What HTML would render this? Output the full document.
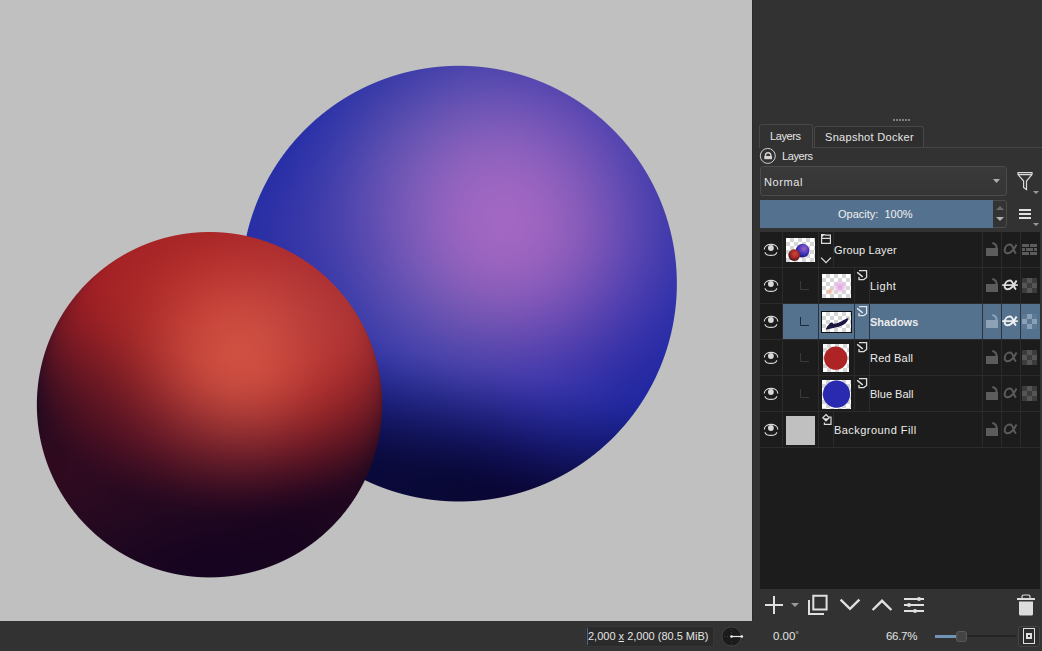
<!DOCTYPE html>
<html><head><meta charset="utf-8">
<style>
*{margin:0;padding:0;box-sizing:border-box}
html,body{width:1042px;height:651px;overflow:hidden;background:#323232;font-family:"Liberation Sans",sans-serif;color:#e6e6e6}
.a{position:absolute}
#canvas{left:0;top:0;width:752px;height:621px;background:#c0c0c0;overflow:hidden}
.t{position:absolute;font-size:11px;white-space:nowrap;line-height:13px}
#list{left:760px;top:232px;width:280px;height:357px;background:#1c1c1c}
.row{position:absolute;left:0;width:280px;height:36px;border-bottom:1px solid #2a2a2a}
.vl{position:absolute;top:0;width:1px;height:36px;background:#2a2a2a}
</style></head><body>
<div id="canvas" class="a">
<svg width="752" height="621" viewBox="0 0 752 621">
<defs>
<radialGradient id="bHi" cx="498" cy="214" r="345" gradientUnits="userSpaceOnUse">
<stop offset="0" stop-color="#a26cc1" stop-opacity="1"/>
<stop offset="0.1667" stop-color="#a26cc1" stop-opacity="0.88"/>
<stop offset="0.3333" stop-color="#a26cc1" stop-opacity="0.61"/>
<stop offset="0.5" stop-color="#a26cc1" stop-opacity="0.32"/>
<stop offset="0.6667" stop-color="#a26cc1" stop-opacity="0.135"/>
<stop offset="0.8333" stop-color="#a26cc1" stop-opacity="0.044"/>
<stop offset="1" stop-color="#a26cc1" stop-opacity="0"/>
</radialGradient>
<linearGradient id="bSh" x1="445.7" y1="345.4" x2="416.4" y2="482" gradientUnits="userSpaceOnUse">
<stop offset="0" stop-color="#0a0838" stop-opacity="0"/>
<stop offset="0.25" stop-color="#0a0838" stop-opacity="0.156"/>
<stop offset="0.5" stop-color="#0a0838" stop-opacity="0.5"/>
<stop offset="0.75" stop-color="#0a0838" stop-opacity="0.844"/>
<stop offset="1" stop-color="#0a0838" stop-opacity="1"/>
</linearGradient>
<radialGradient id="rHi" cx="250" cy="358" r="200" gradientUnits="userSpaceOnUse">
<stop offset="0" stop-color="#cf4f42" stop-opacity="1"/>
<stop offset="0.175" stop-color="#cf4f42" stop-opacity="0.88"/>
<stop offset="0.35" stop-color="#cf4f42" stop-opacity="0.61"/>
<stop offset="0.525" stop-color="#cf4f42" stop-opacity="0.32"/>
<stop offset="0.7" stop-color="#cf4f42" stop-opacity="0.135"/>
<stop offset="0.875" stop-color="#cf4f42" stop-opacity="0.044"/>
<stop offset="1" stop-color="#cf4f42" stop-opacity="0"/>
</radialGradient>
<radialGradient id="rSh" cx="236" cy="260" r="320" gradientUnits="userSpaceOnUse">
<stop offset="0.28" stop-color="#1f071f" stop-opacity="0"/>
<stop offset="0.406" stop-color="#1f071f" stop-opacity="0.06"/>
<stop offset="0.53" stop-color="#1f071f" stop-opacity="0.34"/>
<stop offset="0.64" stop-color="#1f071f" stop-opacity="0.67"/>
<stop offset="0.77" stop-color="#1f071f" stop-opacity="1"/>
</radialGradient>
</defs>
<circle cx="459" cy="283.65" r="217.85" fill="#1124a0"/>
<circle cx="459" cy="283.65" r="217.85" fill="url(#bHi)"/>
<circle cx="459" cy="283.65" r="217.85" fill="url(#bSh)"/>
<circle cx="209.55" cy="404.7" r="172.7" fill="#a12125"/>
<circle cx="209.55" cy="404.7" r="172.7" fill="url(#rHi)"/>
<circle cx="209.55" cy="404.7" r="172.7" fill="url(#rSh)"/>
</svg>
<canvas id="cv" width="752" height="621" style="position:absolute;left:0;top:0"></canvas>
</div>
<script>
(function(){
var cv=document.getElementById('cv');if(!cv||!cv.getContext)return;
var ctx=cv.getContext('2d');var W=752,H=621;
var im=ctx.createImageData(W,H),D=im.data;
for(var i=0;i<W*H;i++){D[i*4]=192;D[i*4+1]=192;D[i*4+2]=192;D[i*4+3]=255;}
var RB={"R":[[237.0,369.0,-7.11,0.06,-1.78],[210.0,243.0,-1.69,-3.4,-2.88],[60.0,403.0,7.0,5.49,-3.95],[210.0,463.0,-4.65,3.29,5.63],[210.0,548.0,-8.16,-2.19,1.87],[340.0,330.0,-10.75,-5.34,-1.91],[330.0,470.0,-26.32,-5.96,-4.14],[100.0,500.0,-7.32,2.18,0.18],[120.0,300.0,-2.59,2.95,-2.59],[150.0,420.0,7.1,0.6,-0.27],[280.0,430.0,12.0,3.43,4.39],[368.0,420.0,9.05,3.77,3.37],[60.0,330.0,14.49,7.91,-5.52],[260.0,500.0,4.43,2.95,-3.05],[330.0,380.0,4.03,-10.82,-7.37],[350.0,330.0,14.09,18.17,14.7],[340.0,400.0,-10.0,2.34,-1.98],[80.0,450.0,34.95,2.19,-0.41],[150.0,520.0,6.65,2.93,1.16],[300.0,540.0,-6.8,-3.09,0.45],[60.0,360.0,-10.8,-4.22,10.96],[100.0,380.0,-24.15,-8.7,-9.17],[250.0,470.0,0.72,-3.79,1.19],[80.0,300.0,1.01,-7.17,2.32],[130.0,460.0,-1.07,-4.05,-1.32],[190.0,500.0,9.51,0.48,-4.81],[350.0,480.0,23.27,5.0,2.73],[280.0,260.0,0.41,-0.38,1.54],[110.0,420.0,-20.65,0.89,7.1],[180.0,330.0,14.58,6.03,4.92],[300.0,380.0,-5.28,-5.48,-3.28],[230.0,420.0,1.89,2.28,-1.28],[170.0,560.0,-8.84,-3.88,0.17]],"B":[[506.0,207.0,-3.83,-4.96,0.59],[460.0,90.0,-0.9,3.69,-1.24],[300.0,150.0,-5.7,-3.37,1.29],[270.0,230.0,10.77,3.75,1.43],[640.0,200.0,-4.85,-1.19,0.07],[660.0,300.0,-3.89,-2.42,2.96],[600.0,400.0,-2.52,-5.41,-9.37],[460.0,470.0,-1.52,1.49,-6.24],[420.0,420.0,3.15,-1.34,1.8],[520.0,380.0,5.46,-5.55,1.34],[560.0,300.0,0.09,1.28,0.76],[400.0,300.0,-0.65,3.89,-0.22],[520.0,440.0,-2.53,-6.84,-2.14],[400.0,470.0,-0.86,1.99,3.99],[500.0,130.0,2.51,1.24,1.48],[330.0,250.0,-5.26,-1.51,-1.9],[600.0,250.0,8.17,1.13,-0.87],[380.0,150.0,4.18,8.04,-0.11],[560.0,420.0,-0.39,11.61,12.03],[480.0,360.0,-7.99,4.25,-5.61],[560.0,460.0,3.67,-0.78,-1.79],[420.0,200.0,-4.94,-3.87,-0.06],[620.0,380.0,-0.44,-3.59,0.34],[380.0,100.0,-4.7,-3.13,-1.64],[500.0,300.0,7.94,0.08,1.14]]};
function sph(cx,cy,R,th,ph,d0,d1,B,K,hx,hy,sx,sy,Hc,cor){
 var Lx=Math.cos(ph)*Math.cos(th),Ly=Math.cos(ph)*Math.sin(th),Lz=Math.sin(ph);
 var x0=Math.max(0,Math.floor(cx-R-2)),x1=Math.min(W,Math.ceil(cx+R+2));
 var y0=Math.max(0,Math.floor(cy-R-2)),y1=Math.min(H,Math.ceil(cy+R+2));
 var s2=2*55*55;
 for(var py=y0;py<y1;py++){for(var px=x0;px<x1;px++){
  var X=px+0.5,Y=py+0.5;var dx=X-cx,dy=Y-cy;var dist=Math.sqrt(dx*dx+dy*dy);
  var a=R-dist+0.5;if(a<=0)continue;if(a>1)a=1;
  var nx=dx/R,ny=dy/R,q=1-nx*nx-ny*ny;var nz=q>0?Math.sqrt(q):0;
  var d=nx*Lx+ny*Ly+nz*Lz;var t=(d-d0)/(d1-d0);if(t<0)t=0;if(t>1)t=1;var s=t*t*(3-2*t);
  var g=Math.exp(-((X-hx)*(X-hx)/(2*sx*sx)+(Y-hy)*(Y-hy)/(2*sy*sy)));
  var c0=0,c1=0,c2=0;
  for(var j=0;j<cor.length;j++){var e=cor[j];var ex=X-e[0]-0.5,ey=Y-e[1]-0.5;var w=Math.exp(-(ex*ex+ey*ey)/s2);c0+=w*e[2];c1+=w*e[3];c2+=w*e[4];}
  var cc=[c0,c1,c2];
  var k=(py*W+px)*4;
  for(var c=0;c<3;c++){var lit=B[c]+Hc[c]*g;var v=K[c]+(lit-K[c])*s+cc[c];if(v>255)v=255;if(v<0)v=0;D[k+c]=D[k+c]*(1-a)+v*a;}
 }}
}
sph(459,283.65,217.85,-1.359,0.030,-0.932,-0.290,[17.3,35.9,159.8],[10.0,7.5,56.2],498,214.1,118.4,112.9,[145.3,71.7,33.1],RB.B);
sph(209.55,404.7,172.7,-1.389,0.546,-0.197,0.741,[160.5,32.9,36.5],[30.9,7.2,31.5],250.1,358.4,64.75,74.39,[46.2,45.6,29.3],RB.R);
ctx.putImageData(im,0,0);
})();
</script>
<div class="a" style="left:752px;top:0;width:1px;height:621px;background:#2a2a2a"></div>

<!-- handle dots -->
<svg class="a" style="left:892px;top:118px" width="20" height="4">
<g fill="#808080"><rect x="1" y="1" width="2" height="2"/><rect x="4" y="1" width="2" height="2"/><rect x="7" y="1" width="2" height="2"/><rect x="10" y="1" width="2" height="2"/><rect x="13" y="1" width="2" height="2"/><rect x="16" y="1" width="2" height="2"/></g>
</svg>

<!-- tabs -->
<div class="a" style="left:760px;top:147px;width:282px;height:1px;background:#454545"></div>
<div class="a" style="left:759px;top:124px;width:54px;height:24px;border:1px solid #474747;border-bottom:none;border-radius:3px 3px 0 0;background:#323232"></div>
<div class="a" style="left:814px;top:126px;width:110px;height:21px;border:1px solid #474747;border-bottom:none;border-radius:3px 3px 0 0;background:#2e2e2e"></div>
<div class="t" style="left:770px;top:130px;letter-spacing:-0.4px">Layers</div>
<div class="t" style="left:825px;top:131px;letter-spacing:0.3px">Snapshot Docker</div>

<!-- header -->
<svg class="a" style="left:759px;top:147px" width="18" height="18">
<circle cx="8.8" cy="8.9" r="7.5" fill="none" stroke="#d0d0d0" stroke-width="1"/>
<path d="M6.4 9.2 C6.4 4.6 11.9 4.6 11.9 9.2" fill="none" stroke="#d4d4d4" stroke-width="1.4"/>
<rect x="5.3" y="9" width="7.7" height="3.2" fill="#d4d4d4"/>
</svg>
<div class="t" style="left:782px;top:150px;letter-spacing:-0.4px">Layers</div>

<!-- combobox -->
<div class="a" style="left:760px;top:166px;width:247px;height:30px;border:1px solid #4b4b4b;border-radius:3px;background:linear-gradient(#3a3a3a,#353535)"></div>
<div class="t" style="left:764px;top:176px;letter-spacing:0.6px">Normal</div>
<svg class="a" style="left:992px;top:178px" width="10" height="6"><path d="M1 1 L8 1 L4.5 5 Z" fill="#b0b0b0"/></svg>

<!-- filter icon -->
<svg class="a" style="left:1015px;top:170px" width="27" height="26">
<path d="M3 2.6 H17 V4.6 L11.5 11 V19.5 L8.6 17.4 V11 L3 4.6 Z M3 4.6 H17" fill="none" stroke="#dadada" stroke-width="1.2" stroke-linejoin="miter"/>
<path d="M18 21 H24 L21 24 Z" fill="#9a9a9a"/>
</svg>

<!-- opacity -->
<div class="a" style="left:760px;top:200px;width:247px;height:28px;border:1px solid #4b4b4b;border-radius:3px;background:#333"></div>
<div class="a" style="left:760px;top:200px;width:233px;height:28px;background:#54728f"></div>
<div class="t" style="left:838px;top:208px;color:#f0f0f0">Opacity:&nbsp; 100%</div>
<svg class="a" style="left:993px;top:200px" width="14" height="28">
<path d="M3 10 L11 10 L7 6 Z" fill="#6a6a6a"/>
<path d="M3 17 L11 17 L7 21 Z" fill="#b0b0b0"/>
</svg>

<!-- menu icon -->
<svg class="a" style="left:1015px;top:205px" width="27" height="26">
<g fill="#e0e0e0"><rect x="4" y="4" width="12" height="2"/><rect x="4" y="8" width="12" height="2"/><rect x="4" y="12" width="12" height="2"/></g>
<path d="M18 18 H24 L21 21 Z" fill="#9a9a9a"/>
</svg>

<!-- layer list -->
<div id="list" class="a"></div>
<!--LIST-->
<div class="a" style="left:760px;top:267px;width:280px;height:1px;background:#2b2b2b"></div>
<div class="a" style="left:782px;top:232px;width:1px;height:35px;background:#2b2b2b"></div>
<div class="a" style="left:818px;top:232px;width:1px;height:35px;background:#2b2b2b"></div>
<div class="a" style="left:833px;top:232px;width:1px;height:35px;background:#2b2b2b"></div>
<div class="a" style="left:982px;top:232px;width:1px;height:35px;background:#2b2b2b"></div>
<div class="a" style="left:1001px;top:232px;width:1px;height:35px;background:#2b2b2b"></div>
<div class="a" style="left:1020px;top:232px;width:1px;height:35px;background:#2b2b2b"></div>
<svg class="a" style="left:760px;top:232px" width="22" height="35" viewBox="760 0 22 35"><path d="M764.3 17.6 C764.3 10.6 777.8 10.6 777.8 17.6" fill="none" stroke="#d8d8d8" stroke-width="1.2"/><circle cx="770.9" cy="16" r="2.9" fill="#d8d8d8"/><path d="M765 20.3 C765.5 24.4 776.3 24.4 776.8 20.3" fill="none" stroke="#d8d8d8" stroke-width="1.2"/></svg>
<div class="t" style="left:834px;top:244px;color:#ececec;letter-spacing:0.15px">Group Layer</div>
<div class="a" style="left:760px;top:303px;width:280px;height:1px;background:#2b2b2b"></div>
<div class="a" style="left:782px;top:268px;width:1px;height:35px;background:#2b2b2b"></div>
<div class="a" style="left:818px;top:268px;width:1px;height:35px;background:#2b2b2b"></div>
<div class="a" style="left:854px;top:268px;width:1px;height:35px;background:#2b2b2b"></div>
<div class="a" style="left:869px;top:268px;width:1px;height:35px;background:#2b2b2b"></div>
<div class="a" style="left:982px;top:268px;width:1px;height:35px;background:#2b2b2b"></div>
<div class="a" style="left:1001px;top:268px;width:1px;height:35px;background:#2b2b2b"></div>
<div class="a" style="left:1020px;top:268px;width:1px;height:35px;background:#2b2b2b"></div>
<svg class="a" style="left:760px;top:268px" width="22" height="35" viewBox="760 0 22 35"><path d="M764.3 17.6 C764.3 10.6 777.8 10.6 777.8 17.6" fill="none" stroke="#d8d8d8" stroke-width="1.2"/><circle cx="770.9" cy="16" r="2.9" fill="#d8d8d8"/><path d="M765 20.3 C765.5 24.4 776.3 24.4 776.8 20.3" fill="none" stroke="#d8d8d8" stroke-width="1.2"/></svg>
<div class="t" style="left:870px;top:280px;color:#ececec;letter-spacing:0.5px">Light</div>
<div class="a" style="left:783px;top:304px;width:257px;height:35px;background:#54718e"></div>
<div class="a" style="left:760px;top:339px;width:280px;height:1px;background:#2b2b2b"></div>
<div class="a" style="left:782px;top:304px;width:1px;height:35px;background:#2b2b2b"></div>
<div class="a" style="left:818px;top:304px;width:1px;height:35px;background:#2a3440"></div>
<div class="a" style="left:854px;top:304px;width:1px;height:35px;background:#2a3440"></div>
<div class="a" style="left:869px;top:304px;width:1px;height:35px;background:#2a3440"></div>
<div class="a" style="left:982px;top:304px;width:1px;height:35px;background:#2a3440"></div>
<div class="a" style="left:1001px;top:304px;width:1px;height:35px;background:#2a3440"></div>
<div class="a" style="left:1020px;top:304px;width:1px;height:35px;background:#2a3440"></div>
<svg class="a" style="left:760px;top:304px" width="22" height="35" viewBox="760 0 22 35"><path d="M764.3 17.6 C764.3 10.6 777.8 10.6 777.8 17.6" fill="none" stroke="#d8d8d8" stroke-width="1.2"/><circle cx="770.9" cy="16" r="2.9" fill="#d8d8d8"/><path d="M765 20.3 C765.5 24.4 776.3 24.4 776.8 20.3" fill="none" stroke="#d8d8d8" stroke-width="1.2"/></svg>
<div class="t" style="left:870px;top:316px;font-weight:bold;color:#ececec;letter-spacing:0">Shadows</div>
<div class="a" style="left:760px;top:375px;width:280px;height:1px;background:#2b2b2b"></div>
<div class="a" style="left:782px;top:340px;width:1px;height:35px;background:#2b2b2b"></div>
<div class="a" style="left:818px;top:340px;width:1px;height:35px;background:#2b2b2b"></div>
<div class="a" style="left:854px;top:340px;width:1px;height:35px;background:#2b2b2b"></div>
<div class="a" style="left:869px;top:340px;width:1px;height:35px;background:#2b2b2b"></div>
<div class="a" style="left:982px;top:340px;width:1px;height:35px;background:#2b2b2b"></div>
<div class="a" style="left:1001px;top:340px;width:1px;height:35px;background:#2b2b2b"></div>
<div class="a" style="left:1020px;top:340px;width:1px;height:35px;background:#2b2b2b"></div>
<svg class="a" style="left:760px;top:340px" width="22" height="35" viewBox="760 0 22 35"><path d="M764.3 17.6 C764.3 10.6 777.8 10.6 777.8 17.6" fill="none" stroke="#d8d8d8" stroke-width="1.2"/><circle cx="770.9" cy="16" r="2.9" fill="#d8d8d8"/><path d="M765 20.3 C765.5 24.4 776.3 24.4 776.8 20.3" fill="none" stroke="#d8d8d8" stroke-width="1.2"/></svg>
<div class="t" style="left:870px;top:352px;color:#ececec;letter-spacing:0.2px">Red Ball</div>
<div class="a" style="left:760px;top:411px;width:280px;height:1px;background:#2b2b2b"></div>
<div class="a" style="left:782px;top:376px;width:1px;height:35px;background:#2b2b2b"></div>
<div class="a" style="left:818px;top:376px;width:1px;height:35px;background:#2b2b2b"></div>
<div class="a" style="left:854px;top:376px;width:1px;height:35px;background:#2b2b2b"></div>
<div class="a" style="left:869px;top:376px;width:1px;height:35px;background:#2b2b2b"></div>
<div class="a" style="left:982px;top:376px;width:1px;height:35px;background:#2b2b2b"></div>
<div class="a" style="left:1001px;top:376px;width:1px;height:35px;background:#2b2b2b"></div>
<div class="a" style="left:1020px;top:376px;width:1px;height:35px;background:#2b2b2b"></div>
<svg class="a" style="left:760px;top:376px" width="22" height="35" viewBox="760 0 22 35"><path d="M764.3 17.6 C764.3 10.6 777.8 10.6 777.8 17.6" fill="none" stroke="#d8d8d8" stroke-width="1.2"/><circle cx="770.9" cy="16" r="2.9" fill="#d8d8d8"/><path d="M765 20.3 C765.5 24.4 776.3 24.4 776.8 20.3" fill="none" stroke="#d8d8d8" stroke-width="1.2"/></svg>
<div class="t" style="left:870px;top:388px;color:#ececec;letter-spacing:0">Blue Ball</div>
<div class="a" style="left:760px;top:447px;width:280px;height:1px;background:#2b2b2b"></div>
<div class="a" style="left:782px;top:412px;width:1px;height:35px;background:#2b2b2b"></div>
<div class="a" style="left:818px;top:412px;width:1px;height:35px;background:#2b2b2b"></div>
<div class="a" style="left:833px;top:412px;width:1px;height:35px;background:#2b2b2b"></div>
<div class="a" style="left:982px;top:412px;width:1px;height:35px;background:#2b2b2b"></div>
<div class="a" style="left:1001px;top:412px;width:1px;height:35px;background:#2b2b2b"></div>
<div class="a" style="left:1020px;top:412px;width:1px;height:35px;background:#2b2b2b"></div>
<svg class="a" style="left:760px;top:412px" width="22" height="35" viewBox="760 0 22 35"><path d="M764.3 17.6 C764.3 10.6 777.8 10.6 777.8 17.6" fill="none" stroke="#d8d8d8" stroke-width="1.2"/><circle cx="770.9" cy="16" r="2.9" fill="#d8d8d8"/><path d="M765 20.3 C765.5 24.4 776.3 24.4 776.8 20.3" fill="none" stroke="#d8d8d8" stroke-width="1.2"/></svg>
<div class="t" style="left:834px;top:424px;color:#ececec;letter-spacing:0.45px">Background Fill</div>

<svg class="a" style="left:760px;top:232px" width="282" height="220" viewBox="760 232 282 220"><g><rect x="786" y="238" width="29" height="24" fill="#ffffff"/><rect x="790" y="238" width="4" height="4" fill="#d6d6d6"/><rect x="798" y="238" width="4" height="4" fill="#d6d6d6"/><rect x="806" y="238" width="4" height="4" fill="#d6d6d6"/><rect x="814" y="238" width="1" height="4" fill="#d6d6d6"/><rect x="786" y="242" width="4" height="4" fill="#d6d6d6"/><rect x="794" y="242" width="4" height="4" fill="#d6d6d6"/><rect x="802" y="242" width="4" height="4" fill="#d6d6d6"/><rect x="810" y="242" width="4" height="4" fill="#d6d6d6"/><rect x="790" y="246" width="4" height="4" fill="#d6d6d6"/><rect x="798" y="246" width="4" height="4" fill="#d6d6d6"/><rect x="806" y="246" width="4" height="4" fill="#d6d6d6"/><rect x="814" y="246" width="1" height="4" fill="#d6d6d6"/><rect x="786" y="250" width="4" height="4" fill="#d6d6d6"/><rect x="794" y="250" width="4" height="4" fill="#d6d6d6"/><rect x="802" y="250" width="4" height="4" fill="#d6d6d6"/><rect x="810" y="250" width="4" height="4" fill="#d6d6d6"/><rect x="790" y="254" width="4" height="4" fill="#d6d6d6"/><rect x="798" y="254" width="4" height="4" fill="#d6d6d6"/><rect x="806" y="254" width="4" height="4" fill="#d6d6d6"/><rect x="814" y="254" width="1" height="4" fill="#d6d6d6"/><rect x="786" y="258" width="4" height="4" fill="#d6d6d6"/><rect x="794" y="258" width="4" height="4" fill="#d6d6d6"/><rect x="802" y="258" width="4" height="4" fill="#d6d6d6"/><rect x="810" y="258" width="4" height="4" fill="#d6d6d6"/><defs><radialGradient id="gtb" cx="0.6" cy="0.35" r="0.7"><stop offset="0" stop-color="#a060c8"/><stop offset="0.6" stop-color="#3a34b8"/><stop offset="1" stop-color="#141060"/></radialGradient><radialGradient id="gtr" cx="0.55" cy="0.4" r="0.7"><stop offset="0" stop-color="#d04a3a"/><stop offset="0.5" stop-color="#a02828"/><stop offset="1" stop-color="#200818"/></radialGradient></defs><circle cx="802.6" cy="250.6" r="6.8" fill="url(#gtb)"/><circle cx="794.2" cy="255.1" r="5.9" fill="url(#gtr)"/><path d="M821.6 236.6 V243.4 H830.4 V235.2 H825.6 L824.4 234.6 H821.6 Z M821.6 238.4 H830.4" fill="none" stroke="#dcdcdc" stroke-width="1.2"/><path d="M822 235 H824.2 L822 237.2 Z" fill="#dcdcdc"/><path d="M821 257.6 L826 262.6 L831 257.6" fill="none" stroke="#dcdcdc" stroke-width="1.3"/><rect x="986" y="248" width="12" height="8" fill="#5c5c5c"/><path d="M992.3 243 Q996.6 244 996.6 248" fill="none" stroke="#5c5c5c" stroke-width="2"/><path d="M1016.6 244.5 C1014.6 248.2 1011.8 253.3 1007.8 253.3 C1005.6 253.3 1004.5 251.8 1004.7 249.8 C1005 246.8 1007.3 244.5 1009.9 244.5 C1012.6 244.5 1013.3 248.3 1014 250.4 C1014.5 252 1015 253 1016.2 253.3" fill="none" stroke="#5c5c5c" stroke-width="1.9"/><rect x="1022" y="244" width="7" height="3" fill="#5c5c5c"/><rect x="1030" y="244" width="7" height="3" fill="#5c5c5c"/><rect x="1022" y="248" width="3" height="3" fill="#5c5c5c"/><rect x="1026" y="248" width="7" height="3" fill="#5c5c5c"/><rect x="1034" y="248" width="3" height="3" fill="#5c5c5c"/><rect x="1022" y="252" width="7" height="3" fill="#5c5c5c"/><rect x="1030" y="252" width="7" height="3" fill="#5c5c5c"/></g><path d="M800.5 281 V289.5 H809" fill="none" stroke="#3a3a3a" stroke-width="1"/><rect x="822" y="274" width="29" height="24" fill="#ffffff"/><rect x="826" y="274" width="4" height="4" fill="#d6d6d6"/><rect x="834" y="274" width="4" height="4" fill="#d6d6d6"/><rect x="842" y="274" width="4" height="4" fill="#d6d6d6"/><rect x="850" y="274" width="1" height="4" fill="#d6d6d6"/><rect x="822" y="278" width="4" height="4" fill="#d6d6d6"/><rect x="830" y="278" width="4" height="4" fill="#d6d6d6"/><rect x="838" y="278" width="4" height="4" fill="#d6d6d6"/><rect x="846" y="278" width="4" height="4" fill="#d6d6d6"/><rect x="826" y="282" width="4" height="4" fill="#d6d6d6"/><rect x="834" y="282" width="4" height="4" fill="#d6d6d6"/><rect x="842" y="282" width="4" height="4" fill="#d6d6d6"/><rect x="850" y="282" width="1" height="4" fill="#d6d6d6"/><rect x="822" y="286" width="4" height="4" fill="#d6d6d6"/><rect x="830" y="286" width="4" height="4" fill="#d6d6d6"/><rect x="838" y="286" width="4" height="4" fill="#d6d6d6"/><rect x="846" y="286" width="4" height="4" fill="#d6d6d6"/><rect x="826" y="290" width="4" height="4" fill="#d6d6d6"/><rect x="834" y="290" width="4" height="4" fill="#d6d6d6"/><rect x="842" y="290" width="4" height="4" fill="#d6d6d6"/><rect x="850" y="290" width="1" height="4" fill="#d6d6d6"/><rect x="822" y="294" width="4" height="4" fill="#d6d6d6"/><rect x="830" y="294" width="4" height="4" fill="#d6d6d6"/><rect x="838" y="294" width="4" height="4" fill="#d6d6d6"/><rect x="846" y="294" width="4" height="4" fill="#d6d6d6"/><defs><radialGradient id="pk"><stop offset="0" stop-color="#e2a0e0"/><stop offset="0.5" stop-color="#eab8ea" stop-opacity="0.8"/><stop offset="1" stop-color="#f0c8f0" stop-opacity="0"/></radialGradient><radialGradient id="orr"><stop offset="0" stop-color="#f0a888"/><stop offset="1" stop-color="#f4c0a8" stop-opacity="0"/></radialGradient></defs><circle cx="840" cy="286.7" r="7.5" fill="url(#pk)"/><circle cx="830.2" cy="291.3" r="4.2" fill="url(#orr)"/><path d="M859 270.6 H866.6 V277.5 L863.8 279.6 H859 V277" fill="none" stroke="#dcdcdc" stroke-width="1.3"/><path d="M857.6 272.6 L862.4 276.6" stroke="#dcdcdc" stroke-width="1.4" stroke-linecap="round"/><rect x="986" y="284" width="12" height="8" fill="#5c5c5c"/><path d="M992.3 279 Q996.6 280 996.6 284" fill="none" stroke="#5c5c5c" stroke-width="2"/><path d="M1016.6 280.5 C1014.6 284.2 1011.8 289.3 1007.8 289.3 C1005.6 289.3 1004.5 287.8 1004.7 285.8 C1005 282.8 1007.3 280.5 1009.9 280.5 C1012.6 280.5 1013.3 284.3 1014 286.4 C1014.5 288 1015 289 1016.2 289.3" fill="none" stroke="#dcdcdc" stroke-width="1.9"/><path d="M1002.2 285.1 H1017.8" stroke="#dcdcdc" stroke-width="1.7"/><rect x="1022" y="278" width="5" height="5" fill="#3c3c3c"/><rect x="1027" y="278" width="5" height="5" fill="#555555"/><rect x="1032" y="278" width="5" height="5" fill="#3c3c3c"/><rect x="1022" y="283" width="5" height="5" fill="#555555"/><rect x="1027" y="283" width="5" height="5" fill="#3c3c3c"/><rect x="1032" y="283" width="5" height="5" fill="#555555"/><rect x="1022" y="288" width="5" height="5" fill="#3c3c3c"/><rect x="1027" y="288" width="5" height="5" fill="#555555"/><rect x="1032" y="288" width="5" height="5" fill="#3c3c3c"/><path d="M800.5 317 V325.5 H809" fill="none" stroke="#1e2a36" stroke-width="1"/><rect x="821.5" y="311.5" width="30" height="21" fill="#fff" stroke="#111" stroke-width="1"/><rect x="822" y="312" width="29" height="20" fill="#ffffff"/><rect x="826" y="312" width="4" height="4" fill="#d6d6d6"/><rect x="834" y="312" width="4" height="4" fill="#d6d6d6"/><rect x="842" y="312" width="4" height="4" fill="#d6d6d6"/><rect x="850" y="312" width="1" height="4" fill="#d6d6d6"/><rect x="822" y="316" width="4" height="4" fill="#d6d6d6"/><rect x="830" y="316" width="4" height="4" fill="#d6d6d6"/><rect x="838" y="316" width="4" height="4" fill="#d6d6d6"/><rect x="846" y="316" width="4" height="4" fill="#d6d6d6"/><rect x="826" y="320" width="4" height="4" fill="#d6d6d6"/><rect x="834" y="320" width="4" height="4" fill="#d6d6d6"/><rect x="842" y="320" width="4" height="4" fill="#d6d6d6"/><rect x="850" y="320" width="1" height="4" fill="#d6d6d6"/><rect x="822" y="324" width="4" height="4" fill="#d6d6d6"/><rect x="830" y="324" width="4" height="4" fill="#d6d6d6"/><rect x="838" y="324" width="4" height="4" fill="#d6d6d6"/><rect x="846" y="324" width="4" height="4" fill="#d6d6d6"/><rect x="826" y="328" width="4" height="4" fill="#d6d6d6"/><rect x="834" y="328" width="4" height="4" fill="#d6d6d6"/><rect x="842" y="328" width="4" height="4" fill="#d6d6d6"/><rect x="850" y="328" width="1" height="4" fill="#d6d6d6"/><defs><filter id="bl1" x="-20%" y="-50%" width="140%" height="200%"><feGaussianBlur stdDeviation="0.6"/></filter></defs><g filter="url(#bl1)" fill="#1c1640"><path d="M825.5 329.5 Q828 325 830.5 322.8 Q832.5 322 833.5 324 Q838 323.5 842 321 Q846 318.5 848.5 318 Q848 322 843 325 Q837 328 831 328.5 Q828 329.5 825.5 329.5 Z"/></g><path d="M859 306.6 H866.6 V313.5 L863.8 315.6 H859 V313" fill="none" stroke="#dce4ec" stroke-width="1.3"/><path d="M857.6 308.6 L862.4 312.6" stroke="#dce4ec" stroke-width="1.4" stroke-linecap="round"/><rect x="986" y="320" width="12" height="8" fill="#8ea2b6"/><path d="M992.3 315 Q996.6 316 996.6 320" fill="none" stroke="#8ea2b6" stroke-width="2"/><path d="M1016.6 316.5 C1014.6 320.2 1011.8 325.3 1007.8 325.3 C1005.6 325.3 1004.5 323.8 1004.7 321.8 C1005 318.8 1007.3 316.5 1009.9 316.5 C1012.6 316.5 1013.3 320.3 1014 322.4 C1014.5 324 1015 325 1016.2 325.3" fill="none" stroke="#f0f0f0" stroke-width="1.9"/><path d="M1002.2 321.1 H1017.8" stroke="#f0f0f0" stroke-width="1.7"/><rect x="1022" y="314" width="5" height="5" fill="#5c7894"/><rect x="1027" y="314" width="5" height="5" fill="#8aa0b6"/><rect x="1032" y="314" width="5" height="5" fill="#5c7894"/><rect x="1022" y="319" width="5" height="5" fill="#8aa0b6"/><rect x="1027" y="319" width="5" height="5" fill="#5c7894"/><rect x="1032" y="319" width="5" height="5" fill="#8aa0b6"/><rect x="1022" y="324" width="5" height="5" fill="#5c7894"/><rect x="1027" y="324" width="5" height="5" fill="#8aa0b6"/><rect x="1032" y="324" width="5" height="5" fill="#5c7894"/><path d="M800.5 353 V361.5 H809" fill="none" stroke="#3a3a3a" stroke-width="1"/><rect x="823" y="344" width="26" height="28" fill="#ffffff"/><rect x="827" y="344" width="4" height="4" fill="#d6d6d6"/><rect x="835" y="344" width="4" height="4" fill="#d6d6d6"/><rect x="843" y="344" width="4" height="4" fill="#d6d6d6"/><rect x="823" y="348" width="4" height="4" fill="#d6d6d6"/><rect x="831" y="348" width="4" height="4" fill="#d6d6d6"/><rect x="839" y="348" width="4" height="4" fill="#d6d6d6"/><rect x="847" y="348" width="2" height="4" fill="#d6d6d6"/><rect x="827" y="352" width="4" height="4" fill="#d6d6d6"/><rect x="835" y="352" width="4" height="4" fill="#d6d6d6"/><rect x="843" y="352" width="4" height="4" fill="#d6d6d6"/><rect x="823" y="356" width="4" height="4" fill="#d6d6d6"/><rect x="831" y="356" width="4" height="4" fill="#d6d6d6"/><rect x="839" y="356" width="4" height="4" fill="#d6d6d6"/><rect x="847" y="356" width="2" height="4" fill="#d6d6d6"/><rect x="827" y="360" width="4" height="4" fill="#d6d6d6"/><rect x="835" y="360" width="4" height="4" fill="#d6d6d6"/><rect x="843" y="360" width="4" height="4" fill="#d6d6d6"/><rect x="823" y="364" width="4" height="4" fill="#d6d6d6"/><rect x="831" y="364" width="4" height="4" fill="#d6d6d6"/><rect x="839" y="364" width="4" height="4" fill="#d6d6d6"/><rect x="847" y="364" width="2" height="4" fill="#d6d6d6"/><rect x="827" y="368" width="4" height="4" fill="#d6d6d6"/><rect x="835" y="368" width="4" height="4" fill="#d6d6d6"/><rect x="843" y="368" width="4" height="4" fill="#d6d6d6"/><circle cx="835.7" cy="358.2" r="11.6" fill="#ae2424"/><path d="M859 342.6 H866.6 V349.5 L863.8 351.6 H859 V349" fill="none" stroke="#dcdcdc" stroke-width="1.3"/><path d="M857.6 344.6 L862.4 348.6" stroke="#dcdcdc" stroke-width="1.4" stroke-linecap="round"/><rect x="986" y="356" width="12" height="8" fill="#5c5c5c"/><path d="M992.3 351 Q996.6 352 996.6 356" fill="none" stroke="#5c5c5c" stroke-width="2"/><path d="M1016.6 352.5 C1014.6 356.2 1011.8 361.3 1007.8 361.3 C1005.6 361.3 1004.5 359.8 1004.7 357.8 C1005 354.8 1007.3 352.5 1009.9 352.5 C1012.6 352.5 1013.3 356.3 1014 358.4 C1014.5 360 1015 361 1016.2 361.3" fill="none" stroke="#5c5c5c" stroke-width="1.9"/><rect x="1022" y="350" width="5" height="5" fill="#3c3c3c"/><rect x="1027" y="350" width="5" height="5" fill="#555555"/><rect x="1032" y="350" width="5" height="5" fill="#3c3c3c"/><rect x="1022" y="355" width="5" height="5" fill="#555555"/><rect x="1027" y="355" width="5" height="5" fill="#3c3c3c"/><rect x="1032" y="355" width="5" height="5" fill="#555555"/><rect x="1022" y="360" width="5" height="5" fill="#3c3c3c"/><rect x="1027" y="360" width="5" height="5" fill="#555555"/><rect x="1032" y="360" width="5" height="5" fill="#3c3c3c"/><path d="M800.5 389 V397.5 H809" fill="none" stroke="#3a3a3a" stroke-width="1"/><rect x="822" y="380" width="29" height="29" fill="#ffffff"/><rect x="826" y="380" width="4" height="4" fill="#d6d6d6"/><rect x="834" y="380" width="4" height="4" fill="#d6d6d6"/><rect x="842" y="380" width="4" height="4" fill="#d6d6d6"/><rect x="850" y="380" width="1" height="4" fill="#d6d6d6"/><rect x="822" y="384" width="4" height="4" fill="#d6d6d6"/><rect x="830" y="384" width="4" height="4" fill="#d6d6d6"/><rect x="838" y="384" width="4" height="4" fill="#d6d6d6"/><rect x="846" y="384" width="4" height="4" fill="#d6d6d6"/><rect x="826" y="388" width="4" height="4" fill="#d6d6d6"/><rect x="834" y="388" width="4" height="4" fill="#d6d6d6"/><rect x="842" y="388" width="4" height="4" fill="#d6d6d6"/><rect x="850" y="388" width="1" height="4" fill="#d6d6d6"/><rect x="822" y="392" width="4" height="4" fill="#d6d6d6"/><rect x="830" y="392" width="4" height="4" fill="#d6d6d6"/><rect x="838" y="392" width="4" height="4" fill="#d6d6d6"/><rect x="846" y="392" width="4" height="4" fill="#d6d6d6"/><rect x="826" y="396" width="4" height="4" fill="#d6d6d6"/><rect x="834" y="396" width="4" height="4" fill="#d6d6d6"/><rect x="842" y="396" width="4" height="4" fill="#d6d6d6"/><rect x="850" y="396" width="1" height="4" fill="#d6d6d6"/><rect x="822" y="400" width="4" height="4" fill="#d6d6d6"/><rect x="830" y="400" width="4" height="4" fill="#d6d6d6"/><rect x="838" y="400" width="4" height="4" fill="#d6d6d6"/><rect x="846" y="400" width="4" height="4" fill="#d6d6d6"/><rect x="826" y="404" width="4" height="4" fill="#d6d6d6"/><rect x="834" y="404" width="4" height="4" fill="#d6d6d6"/><rect x="842" y="404" width="4" height="4" fill="#d6d6d6"/><rect x="850" y="404" width="1" height="4" fill="#d6d6d6"/><rect x="822" y="408" width="4" height="1" fill="#d6d6d6"/><rect x="830" y="408" width="4" height="1" fill="#d6d6d6"/><rect x="838" y="408" width="4" height="1" fill="#d6d6d6"/><rect x="846" y="408" width="4" height="1" fill="#d6d6d6"/><circle cx="836.5" cy="394.2" r="13.6" fill="#2a2ab0"/><path d="M859 378.6 H866.6 V385.5 L863.8 387.6 H859 V385" fill="none" stroke="#dcdcdc" stroke-width="1.3"/><path d="M857.6 380.6 L862.4 384.6" stroke="#dcdcdc" stroke-width="1.4" stroke-linecap="round"/><rect x="986" y="392" width="12" height="8" fill="#5c5c5c"/><path d="M992.3 387 Q996.6 388 996.6 392" fill="none" stroke="#5c5c5c" stroke-width="2"/><path d="M1016.6 388.5 C1014.6 392.2 1011.8 397.3 1007.8 397.3 C1005.6 397.3 1004.5 395.8 1004.7 393.8 C1005 390.8 1007.3 388.5 1009.9 388.5 C1012.6 388.5 1013.3 392.3 1014 394.4 C1014.5 396 1015 397 1016.2 397.3" fill="none" stroke="#5c5c5c" stroke-width="1.9"/><rect x="1022" y="386" width="5" height="5" fill="#3c3c3c"/><rect x="1027" y="386" width="5" height="5" fill="#555555"/><rect x="1032" y="386" width="5" height="5" fill="#3c3c3c"/><rect x="1022" y="391" width="5" height="5" fill="#555555"/><rect x="1027" y="391" width="5" height="5" fill="#3c3c3c"/><rect x="1032" y="391" width="5" height="5" fill="#555555"/><rect x="1022" y="396" width="5" height="5" fill="#3c3c3c"/><rect x="1027" y="396" width="5" height="5" fill="#555555"/><rect x="1032" y="396" width="5" height="5" fill="#3c3c3c"/><rect x="786" y="416" width="29" height="29" fill="#c0c0c0"/><path d="M826 414.5 L829.2 417.8 L826 421 L822.8 417.8 Z" fill="none" stroke="#dcdcdc" stroke-width="1.2"/><path d="M823.2 418.2 H828.8 L826 421 Z" fill="#dcdcdc"/><path d="M829 417 H831 V424.4 H824.4 V422.6" fill="none" stroke="#dcdcdc" stroke-width="1.2"/><rect x="986" y="428" width="12" height="8" fill="#5c5c5c"/><path d="M992.3 423 Q996.6 424 996.6 428" fill="none" stroke="#5c5c5c" stroke-width="2"/><path d="M1016.6 424.5 C1014.6 428.2 1011.8 433.3 1007.8 433.3 C1005.6 433.3 1004.5 431.8 1004.7 429.8 C1005 426.8 1007.3 424.5 1009.9 424.5 C1012.6 424.5 1013.3 428.3 1014 430.4 C1014.5 432 1015 433 1016.2 433.3" fill="none" stroke="#5c5c5c" stroke-width="1.9"/></svg>

<!--/LIST-->

<!-- toolbar -->
<svg class="a" style="left:760px;top:590px" width="282" height="31">
<g stroke="#e0e0e0" stroke-width="2" fill="none">
<path d="M14 6 V24 M5 15 H23"/>
<path d="M53.3 5.8 H66.6 V19.6 H53.3 Z"/>
<path d="M49 10 V24 H64"/>
<path d="M80.6 9.6 L90 18.8 L99.4 9.6" stroke-width="2.4"/>
<path d="M112.6 20 L122 10.8 L131.4 20" stroke-width="2.4"/>
<path d="M144 9 H164 M144 15 H164 M144 21 H164"/>
</g>
<path d="M31 13 H39 L35 17 Z" fill="#9a9a9a"/>
<g fill="#e0e0e0"><circle cx="159" cy="9" r="2"/><circle cx="149" cy="15" r="2"/><circle cx="155" cy="21" r="2"/></g>
<g fill="#dcdcdc">
<rect x="257" y="8" width="18" height="2"/>
<path d="M262 8 v-1.5 a1.5 1.5 0 0 1 1.5 -1.5 h5 a1.5 1.5 0 0 1 1.5 1.5 v1.5" fill="none" stroke="#dcdcdc" stroke-width="1.2"/>
<path d="M259 11.5 H273 V24 a1.5 1.5 0 0 1 -1.5 1.5 H260.5 a1.5 1.5 0 0 1 -1.5 -1.5 Z"/>
</g>
</svg>

<!-- status bar -->
<div class="a" style="left:585px;top:626px;width:129px;height:21px;background:#2a2a2a;border:1px solid #363636"></div>
<div class="a" style="left:587px;top:628px;width:1px;height:17px;background:#4a6a8a"></div>
<div class="t" style="left:588px;top:630px;font-size:11px;color:#e4e4e4">2,000 <u>x</u> 2,000 (80.5 MiB)</div>
<svg class="a" style="left:718px;top:623px" width="28" height="28">
<circle cx="13.5" cy="13.5" r="9.6" fill="#1b1b1b" stroke="#474747" stroke-width="0.8"/>
<g fill="#3a3a3a"><rect x="13" y="6" width="1" height="1"/><rect x="13" y="9" width="1" height="1"/><rect x="13" y="18" width="1" height="1"/><rect x="13" y="21" width="1" height="1"/><rect x="6" y="13" width="1" height="1"/><rect x="9" y="13" width="1" height="1"/></g>
<path d="M13.5 13.5 H24" stroke="#e8e8e8" stroke-width="1.2"/>
<circle cx="13.5" cy="13.5" r="1.3" fill="#f0f0f0"/><circle cx="23.8" cy="13.5" r="1.3" fill="#f0f0f0"/>
</svg>
<div class="t" style="left:773px;top:630px;font-size:11.5px;color:#e4e4e4">0.00<span style="font-size:8px;position:relative;top:-3px">°</span></div>
<div class="t" style="left:886px;top:630px;font-size:11.5px;color:#e4e4e4;letter-spacing:-0.3px">66.7%</div>
<div class="a" style="left:935px;top:635px;width:81px;height:2px;background:#242424;border-radius:1px"></div>
<div class="a" style="left:935px;top:635px;width:22px;height:2.5px;background:#7094b6"></div>
<div class="a" style="left:956px;top:631px;width:11px;height:11px;background:#444;border:1px solid #5a5a5a;border-radius:3px"></div>
<div class="a" style="left:1018px;top:626px;width:22px;height:21px;border:1px solid #444;border-radius:3px;background:#2e2e2e"></div>
<svg class="a" style="left:1018px;top:626px" width="22" height="21">
<rect x="5.5" y="2.5" width="11" height="15" fill="none" stroke="#e0e0e0" stroke-width="1"/>
<rect x="8" y="7" width="6" height="6" fill="#e0e0e0"/>
<rect x="10" y="9" width="2" height="2" fill="#2e2e2e"/>
</svg>
</body></html>
